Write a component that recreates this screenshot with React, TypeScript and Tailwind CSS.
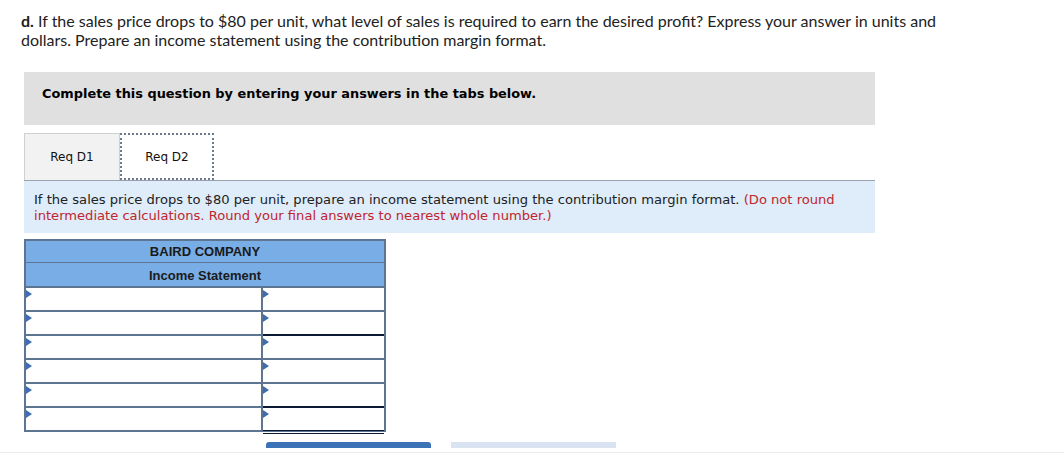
import React from "react";

const Tri = () => (
  <svg width="6" height="8" viewBox="0 0 6 8" className="absolute left-0 top-[2px]">
    <polygon points="0,0 6,4 0,8" fill="#3d6fb0" />
  </svg>
);

function Row({ under }: { under?: "single" | "double" }) {
  return (
    <div className="flex gap-[2px] h-[22px]">
      <div className="relative w-[235px] bg-white">
        <Tri />
      </div>
      <div className="relative flex-1 bg-white">
        <Tri />
        {under === "single" && <div className="absolute left-0 right-0 bottom-[-2px] h-[2px] bg-[#0d1a33]" />}
        {under === "double" && (
          <div className="absolute left-0 right-0 bottom-[-4px] h-[4px] border-t-[1.5px] border-b-[1.5px] border-[#0d1a33]" />
        )}
      </div>
    </div>
  );
}

export default function App() {
  return (
    <div className="w-[1064px] h-[457px] bg-white overflow-hidden relative">
      <div
        className="pl-[21px] pt-[11px] text-[16px] leading-[19px] text-[#222]"
        style={{ fontFamily: "Lato, 'Open Sans', sans-serif" }}
      >
        <b>d.</b> If the sales price drops to $80 per unit, what level of sales is required to earn the desired profit? Express your answer in units and
        <br />
        dollars. Prepare an income statement using the contribution margin format.
      </div>

      <div
        className="ml-[24px] mt-[23px] w-[851px] h-[53px] bg-[#e0e0e0] pl-[18px] pt-[14px] leading-[16px] text-[12.9px] font-bold text-black"
        style={{ fontFamily: "'DejaVu Sans', Verdana, sans-serif" }}
      >
        Complete this question by entering your answers in the tabs below.
      </div>

      <div
        className="ml-[24px] mt-[8px] flex h-[47px] text-[12px] text-[#111]"
        style={{ fontFamily: "'DejaVu Sans', Verdana, sans-serif" }}
      >
        <div className="w-[96px] bg-[#f2f2f2] border border-[#d0d0d0] border-b-0 flex items-center justify-center">
          Req D1
        </div>
        <div className="w-[94px] bg-white border-2 border-dotted border-[#6b7a8c] flex items-center justify-center">
          Req D2
        </div>
      </div>
      <div className="ml-[24px] w-[851px] h-[1px] bg-[#9aa3ad]" />
      <div
        className="ml-[24px] w-[851px] h-[52px] bg-[#dfecf9] pl-[10px] pt-[11px] text-[13.1px] leading-[16px] text-[#222]"
        style={{ fontFamily: "'DejaVu Sans', Verdana, sans-serif" }}
      >
        If the sales price drops to $80 per unit, prepare an income statement using the contribution margin format.{" "}
        <span className="text-[#c0262d]">(Do not round</span>
        <br />
        <span className="text-[#c0262d]">intermediate calculations. Round your final answers to nearest whole number.)</span>
      </div>

      <div className="ml-[24px] mt-[6px] w-[362px] bg-[#5d7591] p-[2px] flex flex-col">
        <div
          className="bg-[#79ade5] flex flex-col text-[13px] font-bold text-[#1a1a1a]"
          style={{ fontFamily: "'Liberation Sans', Arial, sans-serif" }}
        >
          <div className="h-[22px] pt-[1px] flex items-center justify-center border-b border-[#5d7591]">BAIRD COMPANY</div>
          <div className="h-[23px] pt-[2px] flex items-center justify-center">Income Statement</div>
        </div>
        <div className="mt-[2px] flex flex-col gap-[2px]">
          <Row />
          <Row under="single" />
          <Row />
          <Row />
          <Row under="single" />
          <Row under="double" />
        </div>
      </div>

      <div className="mt-[10px] flex gap-[20px] pl-[266px]">
        <div className="w-[165px] h-[6px] rounded-t-[3px] bg-[#3c72b6]" />
        <div className="w-[165px] h-[6px] bg-[#dae3f2]" />
      </div>
      <div className="h-[1px] bg-[#ececec] mt-[4px]" />
    </div>
  );
}
